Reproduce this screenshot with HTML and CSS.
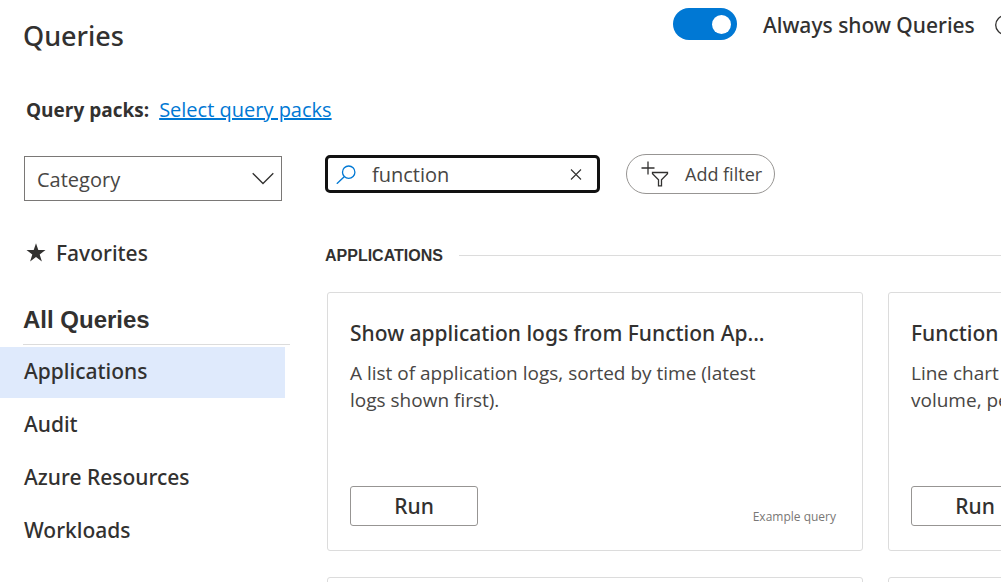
FILE: index.html
```html
<!DOCTYPE html>
<html lang="en">
<head>
<meta charset="utf-8">
<title>Queries</title>
<link rel="stylesheet" href="styles.css">
</head>
<body>
<div class="page">
  <header class="header">
    <h1 class="title">Queries</h1>
    <div class="always">
      <input class="toggle" type="checkbox" id="always" checked>
      <label class="always-label" for="always">Always show Queries</label>
      <svg class="info" viewBox="0 0 20 20" aria-hidden="true"><circle cx="10" cy="10" r="9.3"/><path d="M10 8.5v6M10 5.5v1.5"/></svg>
    </div>
  </header>
  <p class="packs"><strong>Query packs:</strong> <a class="packs-link" href="#">Select query packs</a></p>
  <div class="body">
    <aside class="side">
      <div class="category">
        <select class="category-select" aria-label="Category"><option>Category</option></select>
        <svg class="chevron" viewBox="0 0 22 13" aria-hidden="true"><path d="M.7 1.2 11 11.5 21.3 1.2"/></svg>
      </div>
      <a class="favorites" href="#">
        <svg class="star" viewBox="0 0 20 20" aria-hidden="true"><path d="M10 .2l2.3 6.9h7.2l-5.8 4.3 2.2 7-5.9-4.3-5.9 4.3 2.2-7L.5 7.1h7.2z"/></svg>
        <span>Favorites</span>
      </a>
      <h2 class="all">All Queries</h2>
      <nav class="nav">
        <a class="nav-item selected" href="#">Applications</a>
        <a class="nav-item" href="#">Audit</a>
        <a class="nav-item" href="#">Azure Resources</a>
        <a class="nav-item" href="#">Workloads</a>
      </nav>
    </aside>
    <main class="main">
      <div class="toolbar">
        <div class="search">
          <svg class="search-icon" viewBox="0 0 20 20" aria-hidden="true"><circle cx="12.7" cy="8.2" r="6.2"/><path d="M8.2 12.7.8 19.8"/></svg>
          <input class="search-input" type="text" value="function" aria-label="Search queries">
          <button class="clear" type="button" aria-label="Clear search"><svg class="clear-icon" viewBox="0 0 12 12" aria-hidden="true"><path d="M1 1.5l10 10M11 1.5l-10 10"/></svg></button>
        </div>
        <button class="filter" type="button">
          <svg class="filter-icon" viewBox="0 0 28 26" aria-hidden="true"><path d="M7 .5v13M.5 7h13M11.5 11.5h15v1.3l-6 6v6h-3v-6l-6-6z"/></svg>
          <span>Add filter</span>
        </button>
      </div>
      <h3 class="section">Applications</h3>
      <div class="cards">
        <article class="card">
          <h4 class="card-title">Show application logs from Function Ap...</h4>
          <p class="card-text">A list of application logs, sorted by time (latest<br>logs shown first).</p>
          <div class="card-foot"><button class="run" type="button">Run</button><span class="example">Example query</span></div>
        </article>
        <article class="card">
          <h4 class="card-title">Function</h4>
          <p class="card-text">Line chart<br>volume, pe</p>
          <div class="card-foot"><button class="run" type="button">Run</button></div>
        </article>
        <article class="card"></article>
        <article class="card"></article>
      </div>
    </main>
  </div>
</div>
</body>
</html>
```
FILE: styles.css
```css
* { box-sizing: border-box; }
html, body { height: 100%; }
body { margin: 0; overflow: hidden; background: #fff; color: #323130; font: 400 19px/26px "Open Sans", "Noto Sans", sans-serif; }
h1, h2, h3, h4, p { margin: 0; }
a { color: inherit; text-decoration: none; }
button, input, select { font: inherit; color: inherit; }
svg { display: block; flex: none; fill: none; stroke: #323130; stroke-width: 1.3; }
.title, .always-label, .favorites, .nav-item, .card-title, .run { font-family: "Noto Sans", "Open Sans", sans-serif; font-weight: 500; }
.header { display: flex; padding-left: 23px; height: 97px; align-items: flex-start; }
.title { flex: 0 0 650px; padding-top: 20px; font-size: 27px; line-height: 32px; }
.always { display: flex; flex: none; align-items: center; padding-top: 8px; }
.toggle { appearance: none; display: flex; align-items: center; justify-content: flex-end; width: 64px; height: 32px; margin: 0 26px 0 0; padding: 0 6px; border-radius: 16px; background: #0078d4; }
.toggle::before { content: ""; width: 19px; height: 19px; border-radius: 50%; background: #fff; }
.always-label { padding-top: 2px; font-size: 21px; }
.info { width: 20px; height: 20px; margin: 2px 0 0 20px; }
.packs { display: flex; gap: 10px; padding-left: 26px; margin-bottom: 31px; }
.packs-link { color: #0078d4; font-size: 20px; text-decoration: underline; }
.body { display: grid; grid-template-columns: 290px minmax(0, 1fr); column-gap: 35px; }
.side { padding-top: 2px; }
.category { display: grid; grid-template-columns: 1fr 22px 8px; align-items: center; height: 45px; margin: 0 8px 0 24px; }
.category-select { grid-area: 1 / 1 / 2 / 4; appearance: none; width: 100%; height: 45px; padding: 2px 12px 0; border: 1px solid #7a7876; border-radius: 0; background: #fff; color: #484644; font-size: 20px; }
.chevron { grid-area: 1 / 2; width: 22px; height: 13px; pointer-events: none; }
.favorites { display: flex; align-items: center; gap: 10px; margin: 39px 0 0 26px; font-size: 21px; }
.star { width: 20px; height: 20px; fill: #323130; stroke: none; }
.all { margin: 40px 0 2px 23px; padding-bottom: 11px; border-bottom: 1px solid #dcdcdc; font: 700 24px/27px "Liberation Sans", Arial, sans-serif; }
.nav { display: grid; gap: 2px; padding-right: 5px; }
.nav-item { padding: 11px 24px 14px; font-size: 21px; }
.selected { background: #dfeafc; }
.toolbar { display: flex; align-items: center; gap: 26px; height: 40px; }
.search { display: flex; align-items: center; width: 275px; height: 38px; padding: 0 12px 0 8px; border: 3px solid #111; border-radius: 5px; }
.search-icon { width: 20px; height: 20px; stroke: #0078d4; }
.search-input { flex: 1; min-width: 0; padding: 2px 0 0 16px; border: 0; outline: 0; background: none; color: #484644; font-size: 20px; }
.clear { padding: 3px; border: 0; background: none; }
.clear-icon { width: 12px; height: 12px; stroke-width: 1.1; }
.filter { display: flex; align-items: center; gap: 16px; height: 40px; padding: 0 12px 0 14px; border: 1px solid #979593; border-radius: 20px; background: #fff; color: #484644; font-size: 18px; white-space: nowrap; }
.filter-icon { width: 28px; height: 26px; }
.section { display: flex; align-items: center; gap: 16px; margin: 48px 0 23px; font: 700 16px/27px "Liberation Sans", Arial, sans-serif; text-transform: uppercase; }
.section::after { content: ""; flex: 1; height: 1px; background: #dcdcdc; }
.cards { display: grid; grid-template-columns: repeat(2, 536px); grid-auto-rows: minmax(259px, auto); gap: 26px 25px; padding-left: 2px; }
.card { display: flex; flex-direction: column; padding: 26px 26px 24px 22px; border: 1px solid #dcdcdc; border-radius: 3px; }
.card-title { font-size: 21px; line-height: 28px; white-space: nowrap; }
.card-text { margin-top: 13px; color: #484644; line-height: 27px; white-space: nowrap; }
.card-foot { display: flex; justify-content: space-between; align-items: flex-end; margin-top: auto; }
.run { width: 128px; height: 40px; padding: 0; border: 1px solid #979593; border-radius: 3px; background: #fff; font-size: 21px; }
.example { color: #797775; font-size: 12px; line-height: 18px; }
```
